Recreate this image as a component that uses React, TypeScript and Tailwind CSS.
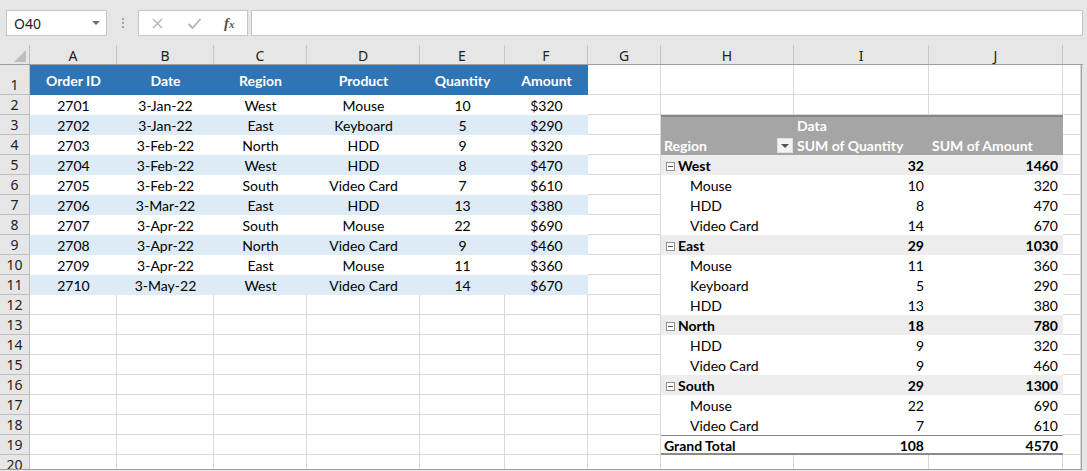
import React from 'react';

const orders: [number, string, string, string, number, string][] = [
  [2701, '3-Jan-22', 'West', 'Mouse', 10, '$320'],
  [2702, '3-Jan-22', 'East', 'Keyboard', 5, '$290'],
  [2703, '3-Feb-22', 'North', 'HDD', 9, '$320'],
  [2704, '3-Feb-22', 'West', 'HDD', 8, '$470'],
  [2705, '3-Feb-22', 'South', 'Video Card', 7, '$610'],
  [2706, '3-Mar-22', 'East', 'HDD', 13, '$380'],
  [2707, '3-Apr-22', 'South', 'Mouse', 22, '$690'],
  [2708, '3-Apr-22', 'North', 'Video Card', 9, '$460'],
  [2709, '3-Apr-22', 'East', 'Mouse', 11, '$360'],
  [2710, '3-May-22', 'West', 'Video Card', 14, '$670'],
];

type PivotRow = { label: string; qty: number; amt: number; kind: 'group' | 'item' | 'total' };

// pivot body starts at sheet row 5
const pivot: PivotRow[] = [
  { label: 'West', qty: 32, amt: 1460, kind: 'group' },
  { label: 'Mouse', qty: 10, amt: 320, kind: 'item' },
  { label: 'HDD', qty: 8, amt: 470, kind: 'item' },
  { label: 'Video Card', qty: 14, amt: 670, kind: 'item' },
  { label: 'East', qty: 29, amt: 1030, kind: 'group' },
  { label: 'Mouse', qty: 11, amt: 360, kind: 'item' },
  { label: 'Keyboard', qty: 5, amt: 290, kind: 'item' },
  { label: 'HDD', qty: 13, amt: 380, kind: 'item' },
  { label: 'North', qty: 18, amt: 780, kind: 'group' },
  { label: 'HDD', qty: 9, amt: 320, kind: 'item' },
  { label: 'Video Card', qty: 9, amt: 460, kind: 'item' },
  { label: 'South', qty: 29, amt: 1300, kind: 'group' },
  { label: 'Mouse', qty: 22, amt: 690, kind: 'item' },
  { label: 'Video Card', qty: 7, amt: 610, kind: 'item' },
  { label: 'Grand Total', qty: 108, amt: 4570, kind: 'total' },
];

const letters = ['A', 'B', 'C', 'D', 'E', 'F', 'G', 'H', 'I', 'J', ''];
const widths = [
  'w-[87px]', 'w-[97px]', 'w-[93px]', 'w-[113px]', 'w-[85px]', 'w-[83px]',
  'w-[73px]', 'w-[133px]', 'w-[135px]', 'w-[134px]', 'w-[18px]',
];
const headers = ['Order ID', 'Date', 'Region', 'Product', 'Quantity', 'Amount'];

const grid = 'shrink-0 h-full border-r border-b border-[#d9d9d9]';
const txt = 'pt-[3px] leading-[16px]';

function RowHead({ n }: { n: number }) {
  return (
    <div className="w-[30px] shrink-0 h-full bg-[#e6e6e6] border-r border-b border-[#bfbfbf] flex items-end justify-center pb-[1px] text-[14px] leading-[16px] text-[#222] font-['Noto_Sans',sans-serif]">
      {n}
    </div>
  );
}

function Blank({ i }: { i: number }) {
  return <div className={`${widths[i]} ${grid}`} />;
}

function MinusBox() {
  return (
    <span className="inline-flex w-[9px] h-[9px] border border-[#8f8f8f] items-center justify-center mr-[3px] mt-[7px] bg-white shrink-0">
      <span className="w-[5px] h-[1px] bg-[#555]" />
    </span>
  );
}

function TableBlock({ n }: { n: number }) {
  if (n === 1) {
    return (
      <div className="flex h-full bg-[#2f75b5] border-b border-[#2f75b5]">
        {headers.map((h, i) => (
          <div key={h} className={`${widths[i]} shrink-0 flex items-center justify-center font-bold text-white pt-[1px]`}>
            {h}
          </div>
        ))}
      </div>
    );
  }
  const r = orders[n - 2];
  return (
    <div className={`flex h-full ${n % 2 === 1 ? 'bg-[#ddebf7]' : 'bg-white'}`}>
      {r.map((v, i) => (
        <div key={i} className={`${widths[i]} shrink-0 text-center ${txt}`}>
          {v}
        </div>
      ))}
    </div>
  );
}

function PivotBlock({ n }: { n: number }) {
  if (n === 3) {
    return (
      <div className="flex h-full bg-[#a5a5a5] border-t-2 border-[#878787] text-white font-bold">
        <div className="w-[133px] shrink-0" />
        <div className="w-[135px] shrink-0 pl-[3px] pt-[1px] leading-[16px]">Data</div>
        <div className="w-[134px] shrink-0" />
      </div>
    );
  }
  if (n === 4) {
    return (
      <div className="flex h-full bg-[#a5a5a5] text-white font-bold">
        <div className="w-[133px] shrink-0 flex justify-between pl-[3px] pr-[1px]">
          <span className={txt}>Region</span>
          <span className="w-[16px] h-[15px] mt-[3px] bg-[#f3f3f3] border border-[#e0e0e0] flex items-center justify-center">
            <span className="w-0 h-0 border-l-[4px] border-r-[4px] border-t-[4px] border-l-transparent border-r-transparent border-t-[#555]" />
          </span>
        </div>
        <div className={`w-[135px] shrink-0 pl-[3px] ${txt}`}>SUM of Quantity</div>
        <div className={`w-[134px] shrink-0 pl-[3px] ${txt}`}>SUM of Amount</div>
      </div>
    );
  }
  const p = pivot[n - 5];
  const row =
    p.kind === 'group'
      ? 'bg-[#ededed] font-bold'
      : p.kind === 'total'
      ? 'bg-white font-bold border-t border-b-2 border-[#8a8a8a]'
      : 'bg-white';
  const t = p.kind === 'total' ? 'leading-[16px] pt-[2px]' : txt;
  return (
    <div className={`flex h-full ${row}`}>
      <div
        className={`w-[133px] shrink-0 flex ${
          p.kind === 'group' ? 'pl-[5px]' : p.kind === 'item' ? 'pl-[29px]' : 'pl-[3px]'
        }`}
      >
        {p.kind === 'group' && <MinusBox />}
        <span className={t}>{p.label}</span>
      </div>
      <div className={`w-[135px] shrink-0 text-right pr-[5px] ${t}`}>{p.qty}</div>
      <div className={`w-[134px] shrink-0 text-right pr-[5px] ${t}`}>{p.amt}</div>
    </div>
  );
}

function SheetRow({ n }: { n: number }) {
  const inTable = n >= 1 && n <= 11;
  const inPivot = n >= 3 && n <= 19;
  return (
    <div className={`flex shrink-0 ${n === 1 ? 'h-[30px]' : 'h-[20px]'}`}>
      <RowHead n={n} />
      {inTable ? (
        <div className="w-[558px] shrink-0 h-full">
          <TableBlock n={n} />
        </div>
      ) : (
        [0, 1, 2, 3, 4, 5].map((i) => <Blank key={i} i={i} />)
      )}
      <Blank i={6} />
      {inPivot ? (
        <div className="w-[402px] shrink-0 h-full">
          <PivotBlock n={n} />
        </div>
      ) : (
        [7, 8, 9].map((i) => <Blank key={i} i={i} />)
      )}
      <Blank i={10} />
    </div>
  );
}

function FormulaBar() {
  return (
    <div className="h-[45px] shrink-0 pt-[10px]">
      <div className="flex h-[26px] items-stretch">
        <div className="ml-[6px] w-[101px] bg-white border border-[#c6c6c6] flex items-center justify-between pl-[7px] pr-[6px] text-[14px] text-[#222] font-['Noto_Sans',sans-serif]">
          <span>O40</span>
          <span className="w-0 h-0 border-l-[4px] border-r-[4px] border-t-[4px] border-l-transparent border-r-transparent border-t-[#6e6e6e]" />
        </div>
        <div className="w-[31px] flex flex-col items-center justify-center gap-[2px]">
          <span className="w-[2px] h-[2px] bg-[#a6a6a6]" />
          <span className="w-[2px] h-[2px] bg-[#a6a6a6]" />
          <span className="w-[2px] h-[2px] bg-[#a6a6a6]" />
        </div>
        <div className="w-[110px] bg-white border border-[#c6c6c6] flex items-center">
          <svg className="ml-[12px]" width="13" height="13" viewBox="0 0 13 13">
            <path d="M2 2 L11 11 M11 2 L2 11" stroke="#b3b3b3" strokeWidth="1.4" fill="none" />
          </svg>
          <svg className="ml-[23px]" width="15" height="13" viewBox="0 0 15 13">
            <path d="M1.5 7 L5.5 11 L13.5 2" stroke="#b3b3b3" strokeWidth="1.8" fill="none" />
          </svg>
          <span className="ml-[22px] italic font-bold text-[15px] text-[#555] font-['Liberation_Serif',serif] leading-none">
            f<span className="text-[11px]">x</span>
          </span>
        </div>
        <div className="ml-[3px] w-[832px] bg-white border border-[#c6c6c6]" />
      </div>
    </div>
  );
}

function ColumnHeaders() {
  return (
    <div className="flex h-[20px] shrink-0 w-[1083px] border-b border-[#9e9e9e] bg-[#e6e6e6] text-[14px] text-[#222] font-['Noto_Sans',sans-serif]">
      <div className="w-[30px] shrink-0 border-r border-[#bfbfbf] relative">
        <svg className="absolute left-[14px] top-[5px]" width="12" height="12" viewBox="0 0 12 12">
          <path d="M12 0 L12 12 L0 12 Z" fill="#bdbdbd" />
        </svg>
      </div>
      {letters.map((l, i) => (
        <div
          key={i}
          className={`${widths[i]} shrink-0 flex items-end justify-center leading-[17px] ${
            i < 10 ? 'border-r border-[#c6c6c6]' : ''
          }`}
        >
          {l}
        </div>
      ))}
    </div>
  );
}

export default function App() {
  const rows = Array.from({ length: 20 }, (_, i) => i + 1);
  return (
    <div className="w-[1087px] h-[471px] bg-[#e6e6e6] overflow-hidden flex flex-col font-['Lato',sans-serif] text-[14px] text-black">
      <FormulaBar />
      <ColumnHeaders />
      <div className="w-[1082px] h-[405px] bg-white border-r border-b border-[#a0a0a0] overflow-hidden flex flex-col">
        {rows.map((n) => (
          <SheetRow key={n} n={n} />
        ))}
      </div>
    </div>
  );
}
